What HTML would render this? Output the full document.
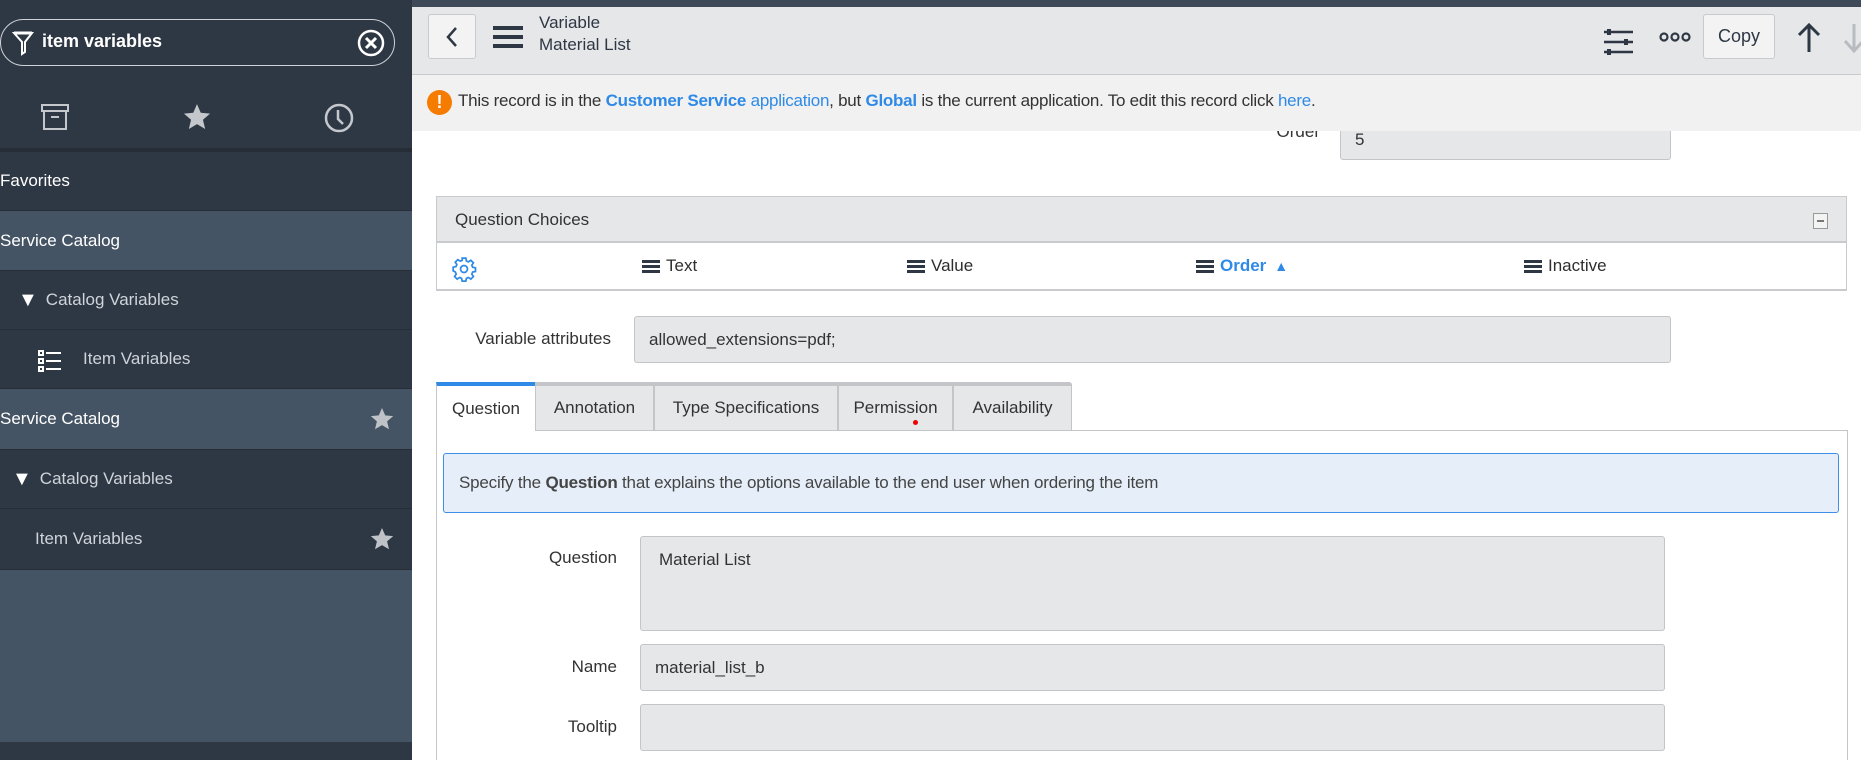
<!DOCTYPE html>
<html><head><meta charset="utf-8"><style>
*{box-sizing:border-box;margin:0;padding:0}
html{overflow:hidden;width:1861px;height:760px}
body{width:1861px;height:760px;overflow:hidden;background:#fff;font-family:"Liberation Sans",sans-serif;position:relative;color:#2e2e2e}
.a{position:absolute}
.sb{left:0;top:0;width:412px;height:760px;background:#2e3744}
.row{position:absolute;left:0;width:412px;color:#fff;font-size:17px;display:flex;align-items:center;border-bottom:1px solid #262d37}
.hl{background:#455464}
.fld{position:absolute;background:#e6e7e9;border:1px solid #c3c5c8;border-radius:3px;font-size:17px;color:#333;padding-left:14px;display:flex;align-items:center}
.lbl{position:absolute;font-size:17px;color:#333;text-align:right}
.col{position:absolute;top:256px;font-size:17px;color:#2e2e2e;display:flex;align-items:center}
.ham{display:inline-block;width:18px;height:13px;border-top:3px solid #2e3744;border-bottom:3px solid #2e3744;position:relative;margin-right:6px}
.ham:after{content:"";position:absolute;left:0;right:0;top:2px;height:3px;background:#2e3744}
.tab{position:absolute;top:385px;height:45px;background:#e6e7e9;border:1px solid #c3c5c8;border-bottom:none;font-size:17px;color:#333;display:flex;align-items:center;justify-content:center}
a{color:#2e8ae6;text-decoration:none}
</style></head><body>
<div class="a" style="left:0;top:0;width:1861px;height:7px;background:#3e4a58"></div>
<div class="a sb"></div>
<!-- search -->
<div class="a" style="left:0;top:19px;width:395px;height:47px;border:1.5px solid #cfd3d8;border-radius:24px"></div>
<svg class="a" style="left:12px;top:30px" width="24" height="28" viewBox="0 0 24 28"><path d="M2 3h18l-7 9v10l-3 2V12z" fill="none" stroke="#fff" stroke-width="2"/><path d="M2 3h18" stroke="#fff" stroke-width="3"/></svg>
<div class="a" style="left:42px;top:31px;color:#fff;font-size:18px;font-weight:bold">item variables</div>
<svg class="a" style="left:356px;top:28px" width="30" height="30" viewBox="0 0 30 30"><circle cx="15" cy="15" r="12" fill="none" stroke="#fff" stroke-width="2.5"/><path d="M10 10l10 10M20 10l-10 10" stroke="#fff" stroke-width="3"/></svg>
<!-- icon row -->
<svg class="a" style="left:40px;top:103px" width="30" height="28" viewBox="0 0 30 28"><rect x="2" y="2" width="26" height="6" fill="none" stroke="#c4c8cd" stroke-width="2"/><rect x="4" y="8" width="22" height="18" fill="none" stroke="#c4c8cd" stroke-width="2"/><path d="M11 14h8" stroke="#c4c8cd" stroke-width="2"/></svg>
<svg class="a" style="left:182px;top:103px" width="30" height="28" viewBox="0 0 24 24"><path d="M12 1l3.2 7.4 8 .7-6.1 5.3 1.9 7.9L12 18.1 5 22.3l1.9-7.9L.8 9.1l8-.7z" fill="#c4c8cd"/></svg>
<svg class="a" style="left:323px;top:102px" width="32" height="32" viewBox="0 0 32 32"><circle cx="16" cy="16" r="13" fill="none" stroke="#c4c8cd" stroke-width="2.5"/><path d="M15 8v9l5 5" fill="none" stroke="#c4c8cd" stroke-width="2.5"/></svg>
<div class="a" style="left:0;top:148px;width:412px;height:4px;background:#262d37"></div>
<div class="row" style="top:152px;height:59px">Favorites</div>
<div class="row hl" style="top:211px;height:60px">Service Catalog</div>
<div class="row" style="top:271px;height:59px;padding-left:18px;color:#cfd4da"><span style="font-size:20px;margin-right:8px;color:#fff">▼</span>Catalog Variables</div>
<div class="row" style="top:330px;height:59px;padding-left:83px;color:#cfd4da">Item Variables</div>
<svg class="a" style="left:38px;top:350px" width="24" height="22" viewBox="0 0 24 22"><g fill="none" stroke="#fff" stroke-width="2"><rect x="1" y="1" width="4" height="4"/><rect x="1" y="9" width="4" height="4"/><rect x="1" y="17" width="4" height="4"/><path d="M8 3h15M8 11h15M8 19h15"/></g></svg>
<div class="row hl" style="top:389px;height:61px">Service Catalog</div>
<div class="row" style="top:450px;height:59px;padding-left:12px;color:#cfd4da"><span style="font-size:20px;margin-right:8px;color:#fff">▼</span>Catalog Variables</div>
<div class="row" style="top:509px;height:61px;padding-left:35px;color:#cfd4da">Item Variables</div>
<svg class="a" style="left:370px;top:407px" width="24" height="24" viewBox="0 0 24 24"><path d="M12 1l3.2 7.4 8 .7-6.1 5.3 1.9 7.9L12 18.1 5 22.3l1.9-7.9L.8 9.1l8-.7z" fill="#bfc3c8"/></svg>
<svg class="a" style="left:370px;top:527px" width="24" height="24" viewBox="0 0 24 24"><path d="M12 1l3.2 7.4 8 .7-6.1 5.3 1.9 7.9L12 18.1 5 22.3l1.9-7.9L.8 9.1l8-.7z" fill="#bfc3c8"/></svg>
<div class="a hl" style="left:0;top:570px;width:412px;height:172px"></div>
<!-- order partial (behind info bar) -->
<div class="lbl" style="left:1250px;top:122px;width:70px">Order</div>
<div class="fld" style="left:1340px;top:120px;width:331px;height:40px">5</div>
<!-- header -->
<div class="a" style="left:412px;top:7px;width:1449px;height:68px;background:#e6e7e9;border-bottom:1px solid #c8cacd"></div>
<div class="a" style="left:428px;top:14px;width:48px;height:45px;background:#f3f3f4;border:1px solid #c8cacd;border-radius:3px"></div>
<svg class="a" style="left:444px;top:26px" width="16" height="22" viewBox="0 0 16 22"><path d="M12 2L4 11l8 9" fill="none" stroke="#2e3744" stroke-width="2.5"/></svg>
<div class="a" style="left:493px;top:26px;width:30px;height:22px;border-top:4px solid #2e3744;border-bottom:4px solid #2e3744"><div style="margin-top:5px;height:4px;background:#2e3744"></div></div>
<div class="a" style="left:539px;top:13px;font-size:17px;color:#2e3744">Variable</div>
<div class="a" style="left:539px;top:35px;font-size:17px;color:#2e3744">Material List</div>
<svg class="a" style="left:1603px;top:28px" width="30" height="28" viewBox="0 0 30 28"><g stroke="#2e3744" stroke-width="2.5"><path d="M1 4h29M1 14h29M1 24h29"/><path d="M6 1v6M23 11v6M6 21v6" stroke-width="4"/></g></svg>
<svg class="a" style="left:1659px;top:31px" width="32" height="12" viewBox="0 0 32 12"><g fill="none" stroke="#2e3744" stroke-width="2.2"><circle cx="5" cy="6" r="3.5"/><circle cx="16" cy="6" r="3.5"/><circle cx="27" cy="6" r="3.5"/></g></svg>
<div class="a" style="left:1703px;top:14px;width:72px;height:45px;background:#f3f3f4;border:1px solid #c8cacd;border-radius:3px;font-size:18px;color:#2e3744;display:flex;align-items:center;justify-content:center">Copy</div>
<svg class="a" style="left:1796px;top:22px" width="26" height="32" viewBox="0 0 26 32"><path d="M13 30V3M3 13L13 3l10 10" fill="none" stroke="#2e3744" stroke-width="3"/></svg>
<svg class="a" style="left:1843px;top:22px" width="18" height="32" viewBox="0 0 18 32"><path d="M11 2v27M2 19l9 10 9-10" fill="none" stroke="#b8bcc1" stroke-width="3"/></svg>
<!-- info bar -->
<div class="a" style="left:412px;top:75px;width:1449px;height:56px;background:#f1f1f1"></div>
<div class="a" style="left:427px;top:90px;width:25px;height:25px;border-radius:50%;background:#f57c00;color:#fff;font-weight:bold;font-size:18px;text-align:center;line-height:25px">!</div>
<div class="a" style="left:458px;top:91px;font-size:17px;color:#333;letter-spacing:-0.25px;white-space:nowrap">This record is in the <a style="font-weight:bold">Customer Service</a> <a>application</a>, but <a style="font-weight:bold">Global</a> is the current application. To edit this record click <a>here</a>.</div>
<!-- question choices -->
<div class="a" style="left:436px;top:196px;width:1411px;height:95px;border:1px solid #c8cacd;border-bottom:2px solid #c8cacd"></div>
<div class="a" style="left:437px;top:197px;width:1409px;height:46px;background:#e6e7e9;border-bottom:2px solid #c8cacd"></div>
<div class="a" style="left:455px;top:210px;font-size:17px;color:#333">Question Choices</div>
<div class="a" style="left:1813px;top:213px;width:15px;height:16px;border:1px solid #999;background:#f3f3f4"><div style="margin:6px 3px;height:2px;background:#777"></div></div>
<svg class="a" style="left:451px;top:256px" width="26" height="26" viewBox="0 0 24 24"><path fill="none" stroke="#2e8ae6" stroke-width="1.6" d="M10.3 2h3.4l.5 2.6 1.9.8 2.2-1.5 2.4 2.4-1.5 2.2.8 1.9 2.6.5v3.4l-2.6.5-.8 1.9 1.5 2.2-2.4 2.4-2.2-1.5-1.9.8-.5 2.6h-3.4l-.5-2.6-1.9-.8-2.2 1.5-2.4-2.4 1.5-2.2-.8-1.9L2 13.7v-3.4l2.6-.5.8-1.9-1.5-2.2 2.4-2.4 2.2 1.5 1.9-.8z"/><circle cx="12" cy="12" r="3.2" fill="none" stroke="#2e8ae6" stroke-width="1.6"/></svg>
<div class="col" style="left:642px"><span class="ham"></span>Text</div>
<div class="col" style="left:907px"><span class="ham"></span>Value</div>
<div class="col" style="left:1196px;color:#2e8ae6;font-weight:bold"><span class="ham"></span>Order <span style="font-size:14px;margin-left:8px">▲</span></div>
<div class="col" style="left:1524px"><span class="ham"></span>Inactive</div>
<!-- variable attributes -->
<div class="lbl" style="left:440px;top:329px;width:171px">Variable attributes</div>
<div class="fld" style="left:634px;top:316px;width:1037px;height:47px">allowed_extensions=pdf;</div>
<!-- tabs -->
<div class="a" style="left:436px;top:430px;width:1412px;height:340px;border:1px solid #c3c5c8"></div>
<div class="a" style="left:436px;top:382px;width:636px;height:4px;background:#c3c5c8;border-radius:3px 3px 0 0"></div>
<div class="a" style="left:436px;top:382px;width:99px;height:49px;background:#fff;border-left:1px solid #c3c5c8;border-top:4px solid #2e8ae6;font-size:17px;display:flex;align-items:center;justify-content:center;color:#333">Question</div>
<div class="tab" style="left:535px;width:119px">Annotation</div>
<div class="tab" style="left:654px;width:184px">Type Specifications</div>
<div class="tab" style="left:838px;width:115px">Permission</div>
<div class="a" style="left:913px;top:420px;width:5px;height:5px;border-radius:50%;background:#e00"></div>
<div class="tab" style="left:953px;width:119px">Availability</div>
<!-- info box -->
<div class="a" style="left:443px;top:453px;width:1396px;height:60px;background:#e5eef9;border:1.5px solid #3d8fe8;border-radius:3px;font-size:17px;color:#444;padding:19px 0 0 15px;letter-spacing:-0.2px">Specify the <b>Question</b> that explains the options available to the end user when ordering the item</div>
<div class="lbl" style="left:500px;top:548px;width:117px">Question</div>
<div class="fld" style="left:640px;top:536px;width:1025px;height:95px;align-items:flex-start;padding-top:13px;padding-left:18px">Material List</div>
<div class="lbl" style="left:500px;top:657px;width:117px">Name</div>
<div class="fld" style="left:640px;top:644px;width:1025px;height:47px">material_list_b</div>
<div class="lbl" style="left:500px;top:717px;width:117px">Tooltip</div>
<div class="fld" style="left:640px;top:704px;width:1025px;height:47px"></div>
</body></html>
